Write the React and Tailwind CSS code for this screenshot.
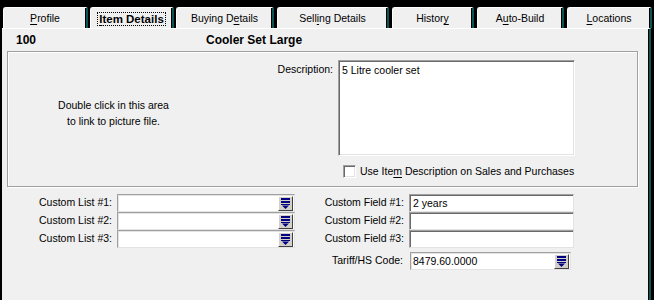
import React from 'react'

const tabs = [
  { pre: '', key: 'P', post: 'rofile', cls: 'ml-[3px] w-[85px]' },
  { pre: '', key: 'I', post: 'tem Details', cls: 'ml-[2px] w-[84px]', active: true },
  { pre: 'Buying D', key: 'e', post: 'tails', cls: 'ml-[2px] w-[98px]' },
  { pre: 'Sell', key: 'i', post: 'ng Details', cls: 'ml-[3px] w-[112px]' },
  { pre: 'Histor', key: 'y', post: '', cls: 'ml-[3px] w-[82px]' },
  { pre: 'A', key: 'u', post: 'to-Build', cls: 'ml-[3px] w-[87px]' },
  { pre: '', key: 'L', post: 'ocations', cls: 'ml-[3px] w-[85px]' },
]

const DropButton = () => (
  <div className="w-[15px] h-[15px] bg-[#d4d0c8] border border-t-white border-l-white border-b-[#404040] border-r-[#404040] flex items-center justify-center shrink-0">
    <svg width="9" height="11" viewBox="0 0 9 11">
      <rect x="0" y="0" width="9" height="2" fill="#000080" />
      <rect x="0" y="3" width="9" height="2" fill="#000080" />
      <rect x="0" y="6" width="9" height="1" fill="#000080" />
      <path d="M1 7.5 H8 L4.5 11 Z" fill="#000080" />
    </svg>
  </div>
)

const Combo = ({ value = '', w }) => (
  <div className={`${w} h-[18px] bg-white border border-t-[#a0a0a0] border-l-[#a0a0a0] border-b-[#e3e3e3] border-r-[#e3e3e3] shadow-[inset_1px_1px_0_#e3e3e3] flex items-center justify-between pl-[2px] pr-[1px]`}>
    <span className="leading-none">{value}</span>
    <DropButton />
  </div>
)

const Field = ({ value = '' }) => (
  <div className="w-[165px] h-[18px] bg-white border border-t-[#a0a0a0] border-l-[#a0a0a0] border-b-[#e3e3e3] border-r-[#e3e3e3] shadow-[inset_1px_1px_0_#696969] flex items-center pl-[3px]">
    <span className="leading-none">{value}</span>
  </div>
)

export default function App() {
  return (
    <div className="w-[654px] h-[300px] bg-black overflow-hidden text-[10.5px] text-black" style={{ fontFamily: '"Liberation Sans", Arial, sans-serif' }}>
      {/* Tabs */}
      <div className="flex items-end h-[28px] pt-[7px]">
        {tabs.map((t, i) => (
          <div
            key={i}
            className={`${t.cls} h-[21px] pt-[2px] relative z-10 bg-[#f0f0f0] border-t border-l border-t-white border-l-white rounded-tl-[3px] rounded-tr-[2px] border-r-2 border-r-[#0f5454] shadow-[inset_-1px_0_0_#000] flex items-center justify-center ${t.active ? 'font-bold text-[11.5px]' : ''}`}
          >
            <span className={t.active ? 'outline outline-1 outline-dotted outline-black px-[1px] leading-[12px]' : ''}>
              {t.pre}<span className="underline underline-offset-2">{t.key}</span>{t.post}
            </span>
          </div>
        ))}
      </div>

      {/* Panel */}
      <div className="ml-[2px] w-[649px] h-[272px] bg-[#f0f0f0] border-t border-t-white border-r-2 border-r-[#0f5454] shadow-[inset_-1px_0_0_#000]">
        <div className="flex h-[22px] items-center font-bold text-[12px]">
          <span className="ml-[14px]">100</span>
          <span className="ml-[170px]">Cooler Set Large</span>
        </div>

        {/* Picture & description group */}
        <div className="ml-[5px] w-[631px] h-[136px] border border-[#a0a0a0] shadow-[inset_1px_1px_0_#fff,1px_1px_0_#fff] flex">
          <div className="w-[211px] flex items-center justify-center text-center leading-[16px] pb-[13px]">
            <div>
              Double click in this area<br />to link to picture file.
            </div>
          </div>
          <div className="flex flex-col pt-[8px]">
            <div className="flex">
              <span className="w-[114px] text-right pt-[2px]">Description:</span>
              <div className="ml-[5px] w-[237px] h-[96px] bg-white border border-t-[#a0a0a0] border-l-[#a0a0a0] border-b-white border-r-white shadow-[inset_1px_1px_0_#696969,inset_-1px_-1px_0_#e3e3e3] pl-[3px] pt-[2px]">
                5 Litre cooler set
              </div>
            </div>
            <div className="flex items-center ml-[124px] mt-[8px]">
              <div className="w-[13px] h-[13px] bg-white border border-t-[#a0a0a0] border-l-[#a0a0a0] border-b-white border-r-white shadow-[inset_1px_1px_0_#696969,inset_-1px_-1px_0_#e3e3e3]" />
              <span className="ml-[4px]">
                Use Ite<span className="underline underline-offset-2">m</span> Description on Sales and Purchases
              </span>
            </div>
          </div>
        </div>

        {/* Custom lists / fields */}
        <div className="flex mt-[7px]">
          <div className="flex flex-col">
            {[1, 2, 3].map(n => (
              <div key={n} className="flex items-center h-[18px]">
                <span className="w-[110px] text-right">Custom List #{n}:</span>
                <div className="ml-[5px]">
                  <Combo w="w-[178px]" />
                </div>
              </div>
            ))}
          </div>
          <div className="flex flex-col ml-[15px]">
            <div className="flex items-center h-[18px]">
              <span className="w-[94px] text-right">Custom Field #1:</span>
              <div className="ml-[5px]"><Field value="2 years" /></div>
            </div>
            <div className="flex items-center h-[18px]">
              <span className="w-[94px] text-right">Custom Field #2:</span>
              <div className="ml-[5px]"><Field /></div>
            </div>
            <div className="flex items-center h-[18px]">
              <span className="w-[94px] text-right">Custom Field #3:</span>
              <div className="ml-[5px]"><Field /></div>
            </div>
            <div className="flex items-center h-[18px] mt-[4px]">
              <span className="w-[93px] text-right">Tariff/HS Code:</span>
              <div className="ml-[7px]">
                <Combo w="w-[161px]" value="8479.60.0000" />
              </div>
            </div>
          </div>
        </div>
      </div>
    </div>
  )
}
